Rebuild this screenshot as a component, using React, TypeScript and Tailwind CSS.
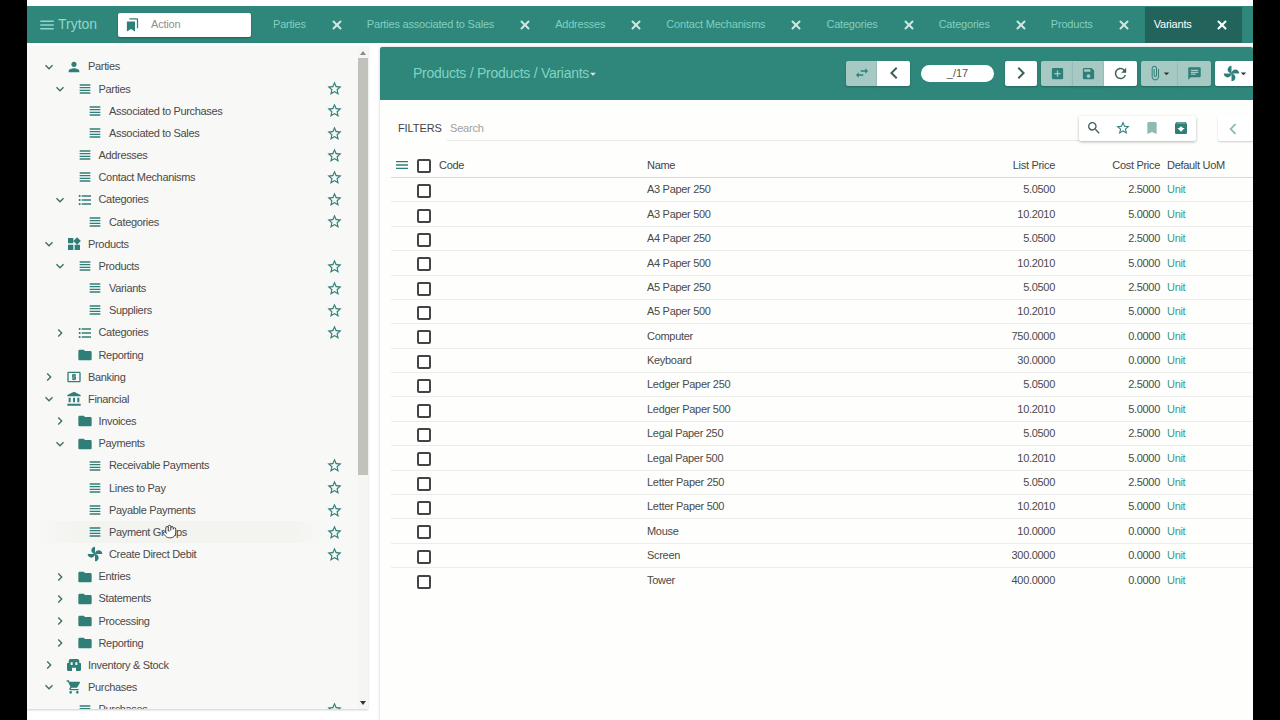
import { ReactNode } from "react";
import { Hand, X } from "lucide-react";
import {
  MdAccountBalance,
  MdAddBox,
  MdArchive,
  MdArrowDropDown,
  MdAttachFile,
  MdBookmark,
  MdChat,
  MdChevronLeft,
  MdChevronRight,
  MdFolder,
  MdFormatListBulleted,
  MdKeyboardArrowDown,
  MdKeyboardArrowRight,
  MdLocalAtm,
  MdMenu,
  MdPerson,
  MdRefresh,
  MdSave,
  MdSearch,
  MdShoppingCart,
  MdStarBorder,
  MdSwapHoriz,
  MdViewHeadline,
  MdWidgets,
} from "react-icons/md";

type IconProps = { className?: string };

function FanIcon({ className }: IconProps) {
  return (
    <svg viewBox="0 0 24 24" fill="currentColor" width="1em" height="1em" className={className}>
      <path d="M12 12c0-3 2.5-5.5 5.5-5.5S23 9 23 12H12zm0 0c0 3-2.5 5.5-5.5 5.5S1 15 1 12h11zm0 0c-3 0-5.5-2.5-5.5-5.5S9 1 12 1v11zm0 0c3 0 5.5 2.5 5.5 5.5S15 23 12 23V12z" />
    </svg>
  );
}

function StockIcon({ className }: IconProps) {
  return (
    <svg viewBox="0 0 24 24" fill="currentColor" width="1em" height="1em" className={className}>
      <path
        fillRule="evenodd"
        d="M7 3h10a3 3 0 0 1 3 3v3h1.5a1 1 0 0 1 1 1v9a2 2 0 0 1-2 2h-17a2 2 0 0 1-2-2v-9a1 1 0 0 1 1-1H4V6a3 3 0 0 1 3-3zM7 8v4h3V8H7zm7 0v4h3V8h-3zM9 16v5h6v-5H9z"
      />
    </svg>
  );
}

function ActionIcon({ className }: IconProps) {
  return (
    <svg viewBox="0 0 24 24" fill="currentColor" width="1em" height="1em" className={className}>
      <path d="M3 7h13v16l-6.5-4L3 23V7z" />
      <path d="M7 2h12a2 2 0 0 1 2 2v14h-2V4H7V2z" />
    </svg>
  );
}

const tabs = [
  "Parties",
  "Parties associated to Sales",
  "Addresses",
  "Contact Mechanisms",
  "Categories",
  "Categories",
  "Products",
];

type MenuRow = {
  label: string;
  level: number;
  open?: boolean;
  icon: (props: IconProps) => ReactNode;
  star?: boolean;
  hover?: boolean;
};

const menu: MenuRow[] = [
  { label: "Parties", level: 0, open: true, icon: MdPerson },
  { label: "Parties", level: 1, open: true, icon: MdViewHeadline, star: true },
  { label: "Associated to Purchases", level: 2, icon: MdViewHeadline, star: true },
  { label: "Associated to Sales", level: 2, icon: MdViewHeadline, star: true },
  { label: "Addresses", level: 1, icon: MdViewHeadline, star: true },
  { label: "Contact Mechanisms", level: 1, icon: MdViewHeadline, star: true },
  { label: "Categories", level: 1, open: true, icon: MdFormatListBulleted, star: true },
  { label: "Categories", level: 2, icon: MdViewHeadline, star: true },
  { label: "Products", level: 0, open: true, icon: MdWidgets },
  { label: "Products", level: 1, open: true, icon: MdViewHeadline, star: true },
  { label: "Variants", level: 2, icon: MdViewHeadline, star: true },
  { label: "Suppliers", level: 2, icon: MdViewHeadline, star: true },
  { label: "Categories", level: 1, open: false, icon: MdFormatListBulleted, star: true },
  { label: "Reporting", level: 1, icon: MdFolder },
  { label: "Banking", level: 0, open: false, icon: MdLocalAtm },
  { label: "Financial", level: 0, open: true, icon: MdAccountBalance },
  { label: "Invoices", level: 1, open: false, icon: MdFolder },
  { label: "Payments", level: 1, open: true, icon: MdFolder },
  { label: "Receivable Payments", level: 2, icon: MdViewHeadline, star: true },
  { label: "Lines to Pay", level: 2, icon: MdViewHeadline, star: true },
  { label: "Payable Payments", level: 2, icon: MdViewHeadline, star: true },
  { label: "Payment Groups", level: 2, icon: MdViewHeadline, star: true, hover: true },
  { label: "Create Direct Debit", level: 2, icon: FanIcon, star: true },
  { label: "Entries", level: 1, open: false, icon: MdFolder },
  { label: "Statements", level: 1, open: false, icon: MdFolder },
  { label: "Processing", level: 1, open: false, icon: MdFolder },
  { label: "Reporting", level: 1, open: false, icon: MdFolder },
  { label: "Inventory & Stock", level: 0, open: false, icon: StockIcon },
  { label: "Purchases", level: 0, open: true, icon: MdShoppingCart },
  { label: "Purchases", level: 1, icon: MdViewHeadline, star: true },
];

const products = [
  ["A3 Paper 250", "5.0500", "2.5000"],
  ["A3 Paper 500", "10.2010", "5.0000"],
  ["A4 Paper 250", "5.0500", "2.5000"],
  ["A4 Paper 500", "10.2010", "5.0000"],
  ["A5 Paper 250", "5.0500", "2.5000"],
  ["A5 Paper 500", "10.2010", "5.0000"],
  ["Computer", "750.0000", "0.0000"],
  ["Keyboard", "30.0000", "0.0000"],
  ["Ledger Paper 250", "5.0500", "2.5000"],
  ["Ledger Paper 500", "10.2010", "5.0000"],
  ["Legal Paper 250", "5.0500", "2.5000"],
  ["Legal Paper 500", "10.2010", "5.0000"],
  ["Letter Paper 250", "5.0500", "2.5000"],
  ["Letter Paper 500", "10.2010", "5.0000"],
  ["Mouse", "10.0000", "0.0000"],
  ["Screen", "300.0000", "0.0000"],
  ["Tower", "400.0000", "0.0000"],
];

const indents = ["pl-[14px]", "pl-[24.5px]", "pl-[35px]"];

function SideRow({ row }: { row: MenuRow }) {
  const Icon = row.icon;
  return (
    <div
      className={`relative flex h-[22.18px] shrink-0 items-center pr-[15px] ${indents[row.level]} ${
        row.hover ? "bg-[linear-gradient(90deg,#f8f8f6_3%,#f3f3f0_15%,#f3f3f0_80%,#f8f8f6_90%)]" : ""
      }`}
    >
      <span className="flex w-4 shrink-0 justify-center text-[#3b6e69]">
        {row.open === true && <MdKeyboardArrowDown className="text-[16px]" />}
        {row.open === false && <MdKeyboardArrowRight className="text-[16px]" />}
      </span>
      <Icon className="ml-[9px] shrink-0 text-[16px] text-[#2f7f78]" />
      <span className="ml-[6px] flex-1 tracking-[-0.33px] text-[#4a4a4a]">{row.label}</span>
      {row.star && <MdStarBorder className="shrink-0 text-[17px] text-[#2f7f78]" />}
      {row.hover && (
        <Hand className="absolute left-[135px] top-[3px] h-[15px] w-[15px] fill-white text-[#333]" strokeWidth={1.5} />
      )}
    </div>
  );
}

function BarButton({ light, className, children }: { light?: boolean; className: string; children: ReactNode }) {
  return (
    <div
      className={`flex h-[25px] shrink-0 items-center justify-center shadow-[0_1px_2px_rgba(0,0,0,0.25)] ${
        light ? "bg-[#a7c9c4] text-[#2f7f78]" : "bg-white text-[#3f5f5b]"
      } ${className}`}
    >
      {children}
    </div>
  );
}

function Box() {
  return <span className="block h-[14px] w-[14px] rounded-[2px] border-2 border-[#444] bg-white" />;
}

export default function App() {
  return (
    <div className="flex h-[720px] w-[1280px] overflow-hidden bg-black font-['Liberation_Sans',sans-serif] text-[11px]">
      <div className="ml-[27px] flex h-full w-[1226px] flex-col overflow-hidden bg-white">
        <div className="mt-[6px] flex h-[37px] shrink-0 items-center overflow-hidden bg-[#2f867a]">
          <MdMenu className="ml-[11px] shrink-0 text-[18px] text-[#8fd8ca]" />
          <span className="ml-[2px] w-[60px] shrink-0 text-[14px] text-[#8fd8ca]">Tryton</span>
          <div className="flex h-[24px] w-[133px] shrink-0 items-center rounded-[2px] bg-white shadow-[0_1px_2px_rgba(0,0,0,0.3)]">
            <ActionIcon className="ml-[7px] shrink-0 text-[15px] text-[#2f7f78]" />
            <span className="ml-[11px] tracking-[-0.2px] text-[#8f8f8f]">Action</span>
          </div>
          <div className="ml-[13px] flex items-center gap-[2px]">
            {tabs.map((tab, i) => (
              <div key={i} className="flex h-[36px] shrink-0 items-center whitespace-nowrap pl-[9px] pr-[12px]">
                <span className="tracking-[-0.2px] text-[#7fd0c0]">{tab}</span>
                <X className="ml-[24px] h-[14px] w-[14px] shrink-0 text-[#cfe6e1]" strokeWidth={3.5} />
              </div>
            ))}
            <div className="flex h-[36px] w-[97px] shrink-0 items-center bg-[#22645c] pl-[9px]">
              <span className="tracking-[-0.2px] text-white">Variants</span>
              <X className="ml-[23px] h-[14px] w-[14px] shrink-0 text-white" strokeWidth={3.5} />
            </div>
          </div>
        </div>

        <div className="mt-[3px] flex min-h-0 flex-1">
          <div className="flex h-[663px] w-[341px] shrink-0 bg-[#f8f8f6] shadow-[0_1px_2px_rgba(0,0,0,0.2)]">
            <div className="flex min-w-0 flex-1 flex-col overflow-hidden pt-[9.5px]">
              {menu.map((row, i) => (
                <SideRow key={i} row={row} />
              ))}
            </div>
            <div className="flex w-[10px] shrink-0 flex-col bg-[#f5f5f3]">
              <span className="mt-[5px] h-0 w-0 self-center border-x-[3px] border-b-[4px] border-x-transparent border-b-[#8a8a8a]" />
              <div className="mt-[3px] h-[417px] bg-[#c2c2bc]" />
              <span className="mt-[226px] h-0 w-0 self-center border-x-[3px] border-t-[4px] border-x-transparent border-t-[#333]" />
            </div>
          </div>

          <div className="ml-[12px] mt-[1px] flex min-w-0 flex-1 flex-col overflow-hidden bg-[#fefefc] shadow-[0_0_3px_rgba(0,0,0,0.2)]">
            <div className="flex h-[53px] shrink-0 items-center overflow-hidden rounded-t-[2px] bg-[#2f867a] pb-[1px]">
              <span className="ml-[33px] flex w-[433px] shrink-0 items-center pt-[1px] text-[14px] tracking-[-0.27px] text-[#80d4c4]">
                Products / Products / Variants
                <MdArrowDropDown className="-ml-[3px] text-[14px] text-[#d5ebe6]" />
              </span>
              <BarButton light className="w-[31px] rounded-l-[2px]">
                <MdSwapHoriz className="text-[16px]" />
              </BarButton>
              <BarButton className="w-[33px] rounded-r-[2px]">
                <MdChevronLeft className="text-[24px]" />
              </BarButton>
              <div className="ml-[11px] flex h-[17px] w-[73px] shrink-0 items-center justify-center rounded-full bg-white text-[#555]">
                _/17
              </div>
              <BarButton className="ml-[11px] w-[32px] rounded-[2px]">
                <MdChevronRight className="text-[24px]" />
              </BarButton>
              <BarButton light className="ml-[4px] w-[32px] rounded-l-[2px]">
                <MdAddBox className="text-[15px]" />
              </BarButton>
              <BarButton light className="w-[31px]">
                <MdSave className="text-[15px]" />
              </BarButton>
              <BarButton className="w-[33px] rounded-r-[2px]">
                <MdRefresh className="text-[17px]" />
              </BarButton>
              <BarButton light className="ml-[4px] w-[37px] rounded-l-[2px]">
                <MdAttachFile className="text-[16px]" />
                <MdArrowDropDown className="-ml-[3px] text-[13px] text-[#333]" />
              </BarButton>
              <BarButton light className="w-[33px] rounded-r-[2px]">
                <MdChat className="text-[15px]" />
              </BarButton>
              <BarButton className="ml-[4px] w-[44px] justify-start rounded-l-[2px] pl-[8px]">
                <FanIcon className="text-[17px] text-[#2f7f78]" />
                <MdArrowDropDown className="-ml-[3px] text-[13px] text-[#333]" />
              </BarButton>
            </div>

            <div className="mt-[16px] flex h-[25px] shrink-0 items-center">
              <span className="ml-[18px] w-[49px] shrink-0 tracking-[-0.1px] text-[#444]">FILTERS</span>
              <span className="flex h-[25px] w-[632px] shrink-0 items-center border-b border-[#e8e8e6] pl-[3px] pt-[1px] tracking-[-0.2px] text-[#a0a0a0]">
                Search
              </span>
              <div className="flex h-[25px] w-[117px] shrink-0 items-center rounded-[2px] bg-white pb-[1px] shadow-[0_1px_3px_rgba(0,0,0,0.3)]">
                <span className="flex w-[29px] justify-center text-[#3f5f5b]">
                  <MdSearch className="text-[16px]" />
                </span>
                <span className="flex w-[29px] justify-center text-[#2f7f78]">
                  <MdStarBorder className="text-[16px]" />
                </span>
                <span className="flex w-[29px] justify-center text-[#8fbab4]">
                  <MdBookmark className="text-[16px]" />
                </span>
                <span className="flex w-[30px] justify-center text-[#2f7f78]">
                  <MdArchive className="text-[16px]" />
                </span>
              </div>
              <div className="ml-[22px] flex h-[25px] w-[40px] shrink-0 items-center rounded-[2px] bg-white pl-[4px] text-[#8fbab4] shadow-[0_1px_2px_rgba(0,0,0,0.2)]">
                <MdChevronLeft className="text-[22px]" />
              </div>
            </div>

            <div className="ml-[11px] mt-[12px] w-[862px] tracking-[-0.3px] text-[#4a4a4a]">
              <div className="grid h-[25px] grid-cols-[48px_208px_344px_64px_105px_auto] items-center border-b border-[#d9d9d7] text-[#444]">
                <span className="flex items-center gap-[9px] pl-[3px]">
                  <MdMenu className="shrink-0 text-[16px] text-[#2f7f78]" />
                  <span className="-ml-[2px] pt-[1px]">
                    <Box />
                  </span>
                </span>
                <span>Code</span>
                <span>Name</span>
                <span className="whitespace-nowrap text-right">List Price</span>
                <span className="text-right">Cost Price</span>
                <span className="whitespace-nowrap pl-[7px]">Default UoM</span>
              </div>
              {products.map((row, i) => (
                <div
                  key={row[0]}
                  className={`grid h-[24.38px] grid-cols-[48px_208px_344px_64px_105px_auto] items-center ${
                    i < products.length - 1 ? "border-b border-[#ececea]" : ""
                  }`}
                >
                  <span className="flex pl-[26px] pt-[3px]">
                    <Box />
                  </span>
                  <span />
                  <span>{row[0]}</span>
                  <span className="text-right">{row[1]}</span>
                  <span className="text-right">{row[2]}</span>
                  <span className="pl-[7px] text-[#3f9a8c]">Unit</span>
                </div>
              ))}
            </div>
          </div>
        </div>
      </div>
    </div>
  );
}
